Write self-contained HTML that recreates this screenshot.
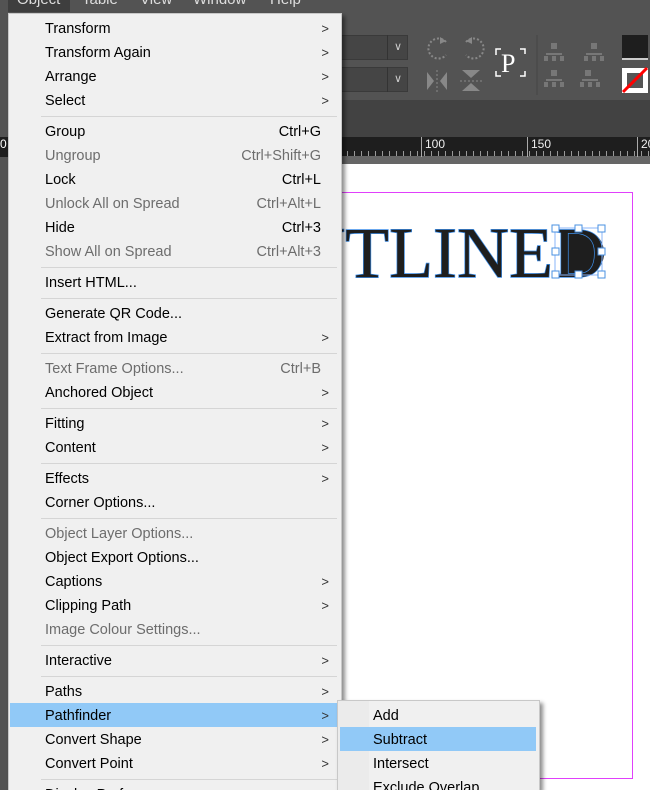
<!DOCTYPE html>
<html><head><meta charset="utf-8"><style>
*{margin:0;padding:0;box-sizing:border-box}
html,body{width:650px;height:790px;overflow:hidden}
body{background:#535353;position:relative;font-family:"Liberation Sans",sans-serif}
.abs{position:absolute}
.mb{top:0;left:0;width:650px;height:12px;background:#535353;color:#ddd;font-size:15px;overflow:hidden}
.mb span{position:absolute;top:-9px}
.menu{left:8px;top:13px;width:334px;height:777px;background:#f0f0f0;border:1px solid #c8c8c8;border-bottom:none;box-shadow:3px 3px 4px rgba(0,0,0,.45);overflow:hidden}
.it{position:absolute;left:36px;font-size:14.5px;color:#000;height:24px;line-height:24px;width:290px;white-space:nowrap}
.it.d{color:#6d6d6d}
.it .sc{position:absolute;right:14px}
.it .ar{position:absolute;right:6px;font-size:13px;color:#333}
.sep{position:absolute;left:32px;right:4px;height:1px;background:#d5d5d5}
.hl{position:absolute;background:#91c9f7}
.sub{left:337px;top:700px;width:203px;height:90px;background:#f0f0f0;border:1px solid #c8c8c8;border-bottom:none;box-shadow:3px 3px 4px rgba(0,0,0,.45);overflow:hidden}
</style></head><body>
<div class="abs mb"><div class="abs" style="left:8px;top:0;width:62px;height:12px;background:#3e3e3e"></div>
<span style="left:17px">Object</span><span style="left:82px">Table</span><span style="left:140px">View</span><span style="left:193px">Window</span><span style="left:270px">Help</span></div>
<div class="abs" style="left:0;top:12px;width:650px;height:88px;background:#535353"></div>
<div class="abs" style="left:0;top:100px;width:650px;height:37px;background:#424242"></div>
<div class="abs" style="left:0;top:137px;width:650px;height:20px;background:#1e1e1e"></div>
<div class="abs" style="left:0;top:156px;width:650px;height:8px;background:#666"></div>
<div class="abs" style="left:0;top:164px;width:650px;height:626px;background:#fff"></div>
<div class="abs" style="left:0;top:12px;width:8px;height:778px;background:#535353"></div>
<div class="abs" style="left:0;top:137px;width:8px;height:20px;background:#1e1e1e;color:#fff;font-size:12px">0</div>
<div class="abs" style="left:0;top:164px;width:8px;height:626px;background:#535353"></div>
<div class="abs" style="left:421px;top:137px;width:1px;height:20px;background:#aaa"></div>
<div class="abs" style="left:425px;top:137px;color:#eee;font-size:12px">100</div>
<div class="abs" style="left:527px;top:137px;width:1px;height:20px;background:#aaa"></div>
<div class="abs" style="left:531px;top:137px;color:#eee;font-size:12px">150</div>
<div class="abs" style="left:637px;top:137px;width:1px;height:20px;background:#aaa"></div>
<div class="abs" style="left:641px;top:137px;color:#eee;font-size:12px">20</div>
<div class="abs" style="left:340px;top:151px;width:310px;height:5px;background:repeating-linear-gradient(90deg,#999 0 1px,transparent 1px 7px)"></div>
<div class="abs" style="left:340px;top:35px;width:68px;height:25px;background:#454545;border:1px solid #3a3a3a"></div>
<div class="abs" style="left:387px;top:35px;width:21px;height:25px;border-left:1px solid #333;color:#ccc;font-size:11px;text-align:center;line-height:25px">&#8744;</div>
<div class="abs" style="left:340px;top:67px;width:68px;height:25px;background:#454545;border:1px solid #3a3a3a"></div>
<div class="abs" style="left:387px;top:67px;width:21px;height:25px;border-left:1px solid #333;color:#ccc;font-size:11px;text-align:center;line-height:25px">&#8744;</div>
<svg class="abs" style="left:410px;top:25px" width="240" height="80">
<g fill="none" stroke="#888" stroke-width="2"><path d="M36 17 A10 10 0 1 0 36 30" stroke-dasharray="2 2"/><path d="M56 17 A10 10 0 1 1 56 30" stroke-dasharray="2 2"/></g>
<path d="M30 12l6 4-6 3z M62 12l-6 4 6 3z" fill="#888"/>
<path d="M17 47v18l7-9z M37 47v18l-7-9z" fill="#888"/><path d="M27 45v22" stroke="#888" stroke-dasharray="2 2"/>
<path d="M52 45h18l-9 8z M52 66h18l-9-8z" fill="#888"/><path d="M50 56h22" stroke="#888" stroke-dasharray="2 2"/>
<g fill="none" stroke="#fff" stroke-width="1.5"><path d="M86 30v-6h5 M110 24h5v5 M86 46v5h5 M110 51h5v-5"/></g>
<text x="91" y="47" fill="#fff" font-family="Liberation Serif" font-size="26">P</text>
<path d="M127 10v60" stroke="#444"/>
<g fill="#777"><rect x="141" y="18" width="6" height="6"/><rect x="136" y="28" width="16" height="2"/><rect x="134" y="31" width="4" height="5"/><rect x="142" y="31" width="4" height="5"/><rect x="150" y="31" width="4" height="5"/>
<rect x="181" y="18" width="6" height="6"/><rect x="176" y="28" width="16" height="2"/><rect x="174" y="31" width="4" height="5"/><rect x="182" y="31" width="4" height="5"/><rect x="190" y="31" width="4" height="5"/>
<rect x="141" y="45" width="6" height="6"/><rect x="136" y="54" width="16" height="2"/><rect x="134" y="57" width="4" height="5"/><rect x="142" y="57" width="4" height="5"/><rect x="150" y="57" width="4" height="5"/>
<rect x="175" y="45" width="6" height="6"/><rect x="172" y="54" width="16" height="2"/><rect x="170" y="57" width="4" height="5"/><rect x="178" y="57" width="4" height="5"/><rect x="186" y="57" width="4" height="5"/></g>
<rect x="212" y="10" width="26" height="24" fill="#1e1e1e"/><rect x="212" y="33" width="26" height="2" fill="#ccc"/>
<rect x="212" y="43" width="26" height="25" fill="#fff"/><rect x="217" y="48" width="16" height="15" fill="#555"/><path d="M213 67l24-24" stroke="#f00" stroke-width="3"/>
</svg>
<div class="abs" style="left:320px;top:192px;width:313px;height:587px;border:1px solid #e040fb"></div>
<svg class="abs" style="left:560px;top:228px" width="50" height="50"><path d="M6 2h14c14 0 24 9 24 23s-10 23-24 23H6z" fill="#1e1e1e"/></svg>
<div class="abs" style="right:45px;top:217px;font-family:'Liberation Serif',serif;font-size:72px;line-height:72px;color:#1e1e1e;white-space:nowrap;-webkit-text-stroke:1.4px #3d8ee8;paint-order:stroke fill">OUTLINED</div>
<svg class="abs" style="left:551px;top:224px" width="56" height="56"><rect x="4" y="4" width="47" height="47" fill="none" stroke="#8ab4f8"/><g fill="#fff" stroke="#4a90e2"><rect x="1" y="1" width="7" height="7"/><rect x="24" y="1" width="7" height="7"/><rect x="47" y="1" width="7" height="7"/><rect x="1" y="24" width="7" height="7"/><rect x="47" y="24" width="7" height="7"/><rect x="1" y="47" width="7" height="7"/><rect x="24" y="47" width="7" height="7"/><rect x="47" y="47" width="7" height="7"/></g></svg>
<div class="abs menu">
<div class="hl" style="left:1px;top:689px;width:331px;height:24px"></div>
<div class="it" style="top:3px">Transform<span class="ar">&gt;</span></div>
<div class="it" style="top:27px">Transform Again<span class="ar">&gt;</span></div>
<div class="it" style="top:51px">Arrange<span class="ar">&gt;</span></div>
<div class="it" style="top:75px">Select<span class="ar">&gt;</span></div>
<div class="sep" style="top:102px"></div>
<div class="it" style="top:106px">Group<span class="sc">Ctrl+G</span></div>
<div class="it d" style="top:130px">Ungroup<span class="sc">Ctrl+Shift+G</span></div>
<div class="it" style="top:154px">Lock<span class="sc">Ctrl+L</span></div>
<div class="it d" style="top:178px">Unlock All on Spread<span class="sc">Ctrl+Alt+L</span></div>
<div class="it" style="top:202px">Hide<span class="sc">Ctrl+3</span></div>
<div class="it d" style="top:226px">Show All on Spread<span class="sc">Ctrl+Alt+3</span></div>
<div class="sep" style="top:253px"></div>
<div class="it" style="top:257px">Insert HTML...</div>
<div class="sep" style="top:284px"></div>
<div class="it" style="top:288px">Generate QR Code...</div>
<div class="it" style="top:312px">Extract from Image<span class="ar">&gt;</span></div>
<div class="sep" style="top:339px"></div>
<div class="it d" style="top:343px">Text Frame Options...<span class="sc">Ctrl+B</span></div>
<div class="it" style="top:367px">Anchored Object<span class="ar">&gt;</span></div>
<div class="sep" style="top:394px"></div>
<div class="it" style="top:398px">Fitting<span class="ar">&gt;</span></div>
<div class="it" style="top:422px">Content<span class="ar">&gt;</span></div>
<div class="sep" style="top:449px"></div>
<div class="it" style="top:453px">Effects<span class="ar">&gt;</span></div>
<div class="it" style="top:477px">Corner Options...</div>
<div class="sep" style="top:504px"></div>
<div class="it d" style="top:508px">Object Layer Options...</div>
<div class="it" style="top:532px">Object Export Options...</div>
<div class="it" style="top:556px">Captions<span class="ar">&gt;</span></div>
<div class="it" style="top:580px">Clipping Path<span class="ar">&gt;</span></div>
<div class="it d" style="top:604px">Image Colour Settings...</div>
<div class="sep" style="top:631px"></div>
<div class="it" style="top:635px">Interactive<span class="ar">&gt;</span></div>
<div class="sep" style="top:662px"></div>
<div class="it" style="top:666px">Paths<span class="ar">&gt;</span></div>
<div class="it" style="top:690px">Pathfinder<span class="ar">&gt;</span></div>
<div class="it" style="top:714px">Convert Shape<span class="ar">&gt;</span></div>
<div class="it" style="top:738px">Convert Point<span class="ar">&gt;</span></div>
<div class="sep" style="top:765px"></div>
<div class="it" style="top:769px">Display Performance<span class="ar">&gt;</span></div>
</div>
<div class="abs sub">
<div class="abs" style="left:0;top:0;width:31px;height:90px;background:#ebebeb"></div>
<div class="hl" style="left:2px;top:26px;width:196px;height:24px"></div>
<div class="it" style="left:35px;top:3px;width:160px">Add</div>
<div class="it" style="left:35px;top:27px;width:160px">Subtract</div>
<div class="it" style="left:35px;top:51px;width:160px">Intersect</div>
<div class="it" style="left:35px;top:75px;width:160px">Exclude Overlap</div>
</div>
</body></html>
